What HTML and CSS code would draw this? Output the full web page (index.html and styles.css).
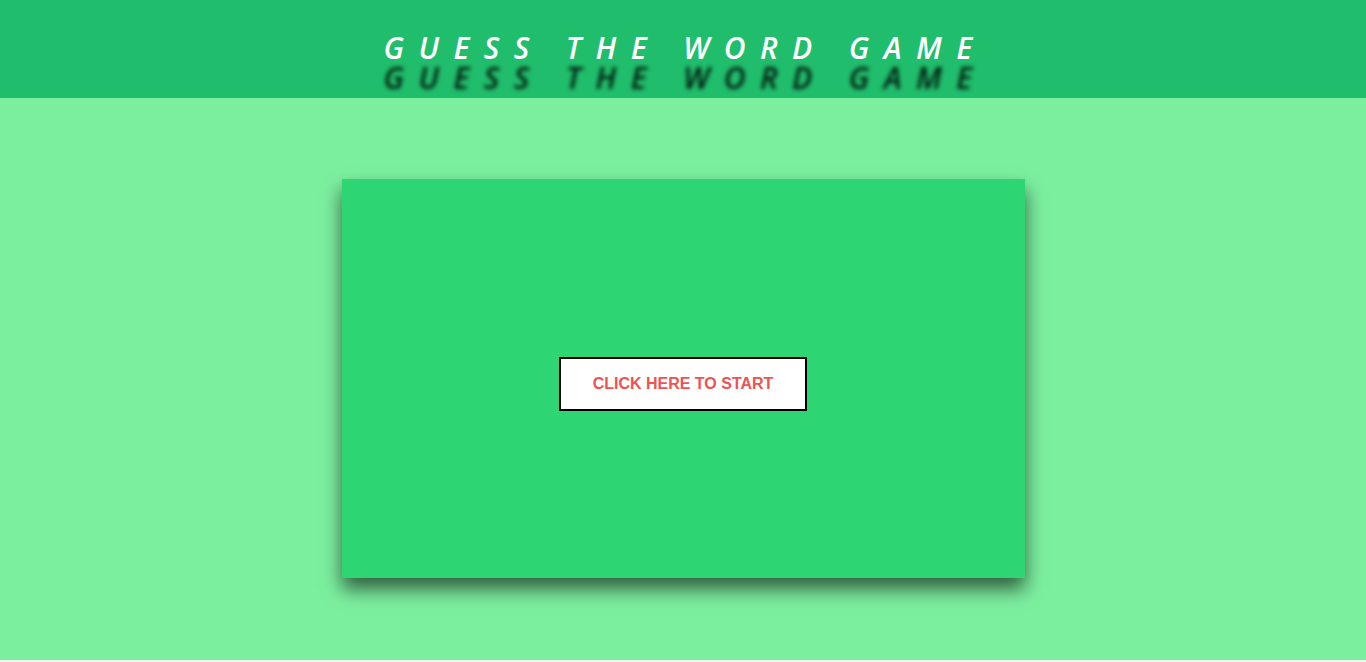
FILE: index.html
```html
<!DOCTYPE html>
<html lang="en">
<head>
    <meta charset="UTF-8">
    <meta name="viewport" content="width=device-width, initial-scale=1.0">
    <title>Guess The Word Game</title>
    <link rel="stylesheet" href="styles.css">
</head>
<body>
    <div class="page">
        <header class="header">
            <h1>Guess the word game</h1>
        </header>
        <main class="main">
            <div class="game-box">
                <button class="start-button" id="startBtn">Click here to start</button>
            </div>
        </main>
    </div>
</body>
</html>
```

FILE: styles.css
```css
body {
    margin: 0;
    background: #f4f4f4;
    font-family: 'Open Sans', sans-serif;
}
.page {
    height: 660px;
    display: flex;
    flex-direction: column;
    background: #7cef9f;
}
.header {
    height: 98px;
    background: #20be6c;
    display: flex;
    justify-content: center;
    box-sizing: border-box;
    padding-top: 28px;
    padding-left: 4px;
}
h1 {
    margin: 0;
    color: white;
    font-size: 30px;
    font-style: italic;
    font-weight: 600;
    text-transform: uppercase;
    letter-spacing: 14.4px;
    line-height: 40px;
    text-shadow: 0 30px 4px rgba(0, 0, 0, 0.85);
}
.main {
    flex: 1;
    display: flex;
    justify-content: center;
    padding-top: 81px;
}
.game-box {
    width: 683px;
    height: 399px;
    background: #2ed573;
    box-shadow: 0 11px 18px rgba(0, 0, 0, 0.6);
    display: flex;
    justify-content: center;
    align-items: flex-start;
    padding-top: 178px;
    box-sizing: border-box;
}
.start-button {
    width: 248px;
    height: 54px;
    background: white;
    border: 2px solid black;
    color: #ee5253;
    font-family: 'Liberation Sans', Arial, sans-serif;
    font-weight: bold;
    font-size: 16px;
    text-transform: uppercase;
    cursor: pointer;
}
```
